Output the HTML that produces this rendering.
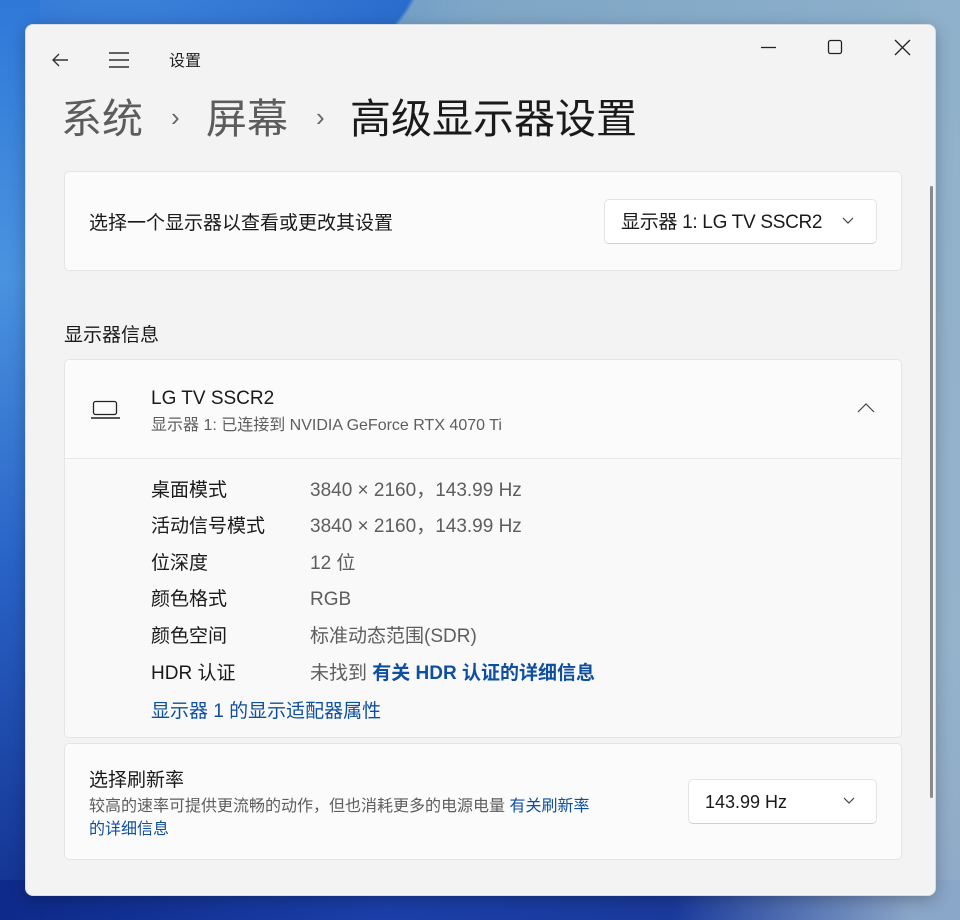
<!DOCTYPE html>
<html><head><meta charset="utf-8"><style>
*{margin:0;padding:0;box-sizing:border-box}
body{width:960px;height:920px;overflow:hidden;position:relative;font-family:"Liberation Sans","Noto Sans CJK SC",sans-serif;
background:linear-gradient(90deg,#1d5fc9 0%,#3c86d8 3%,#7fa6c6 50%,#8db0cb 100%);}
.bg1{position:absolute;left:0;top:0;width:960px;height:920px;background:
radial-gradient(ellipse 500px 260px at 120px -40px,#3f86dc 0%,#2a6ccc 60%,transparent 61%),
radial-gradient(ellipse 700px 200px at 300px 980px,#132c8a 0%,#1a3aa0 70%,transparent 71%);}
.bl{position:absolute;left:0;top:0;width:40px;height:920px;background:linear-gradient(180deg,#2f78d8,#4a93e0 30%,#2a65c8 60%,#12308f 100%)}
.br{position:absolute;right:0;top:0;width:40px;height:920px;background:linear-gradient(180deg,#8fb1cb,#95b3cb 70%,#8fa9c7)}
.bb{position:absolute;left:0;top:880px;width:960px;height:40px;background:linear-gradient(90deg,#0e2a8a,#1b3fa8 40%,#1a3a9c 70%,#8aa6c8 95%)}
.win{position:absolute;left:25px;top:24px;width:911px;height:872px;background:#f3f3f3;border-radius:8px;border:1px solid #d8dde3;box-shadow:0 4px 16px rgba(0,0,0,.25)}
.a{position:absolute;white-space:nowrap;line-height:26px}
.card{position:absolute;background:#fbfbfb;border:1px solid #e5e5e5;border-radius:5px}
.dd{position:absolute;background:#fff;border:1px solid #e3e3e3;border-bottom-color:#d0d0d0;border-radius:5px}
.lbl{font-size:19px;color:#1a1a1a}
.val{font-size:19px;color:#5e5e5e}
.lk{color:#0f4fa0}
</style></head><body>
<div class="bg1"></div><div class="bl"></div><div class="br"></div><div class="bb"></div>
<div class="win">
<svg class="a" style="left:24px;top:25px" width="20" height="20" viewBox="0 0 20 20"><path d="M18 10H3M9 4L3 10l6 6" stroke="#333" stroke-width="1.4" fill="none"/></svg>
<svg class="a" style="left:82px;top:25px" width="22" height="20" viewBox="0 0 22 20"><path d="M1 3h20M1 10h20M1 17h20" stroke="#333" stroke-width="1.4"/></svg>
<div class="a" style="left:143px;top:24px;font-size:16px;color:#222">设置</div>
<svg class="a" style="left:733px;top:21px" width="18" height="4"><path d="M2 1.5h15" stroke="#222" stroke-width="1.3"/></svg>
<svg class="a" style="left:801px;top:14px" width="16" height="16"><rect x="1.5" y="1.5" width="13" height="13" rx="2" stroke="#222" stroke-width="1.3" fill="none"/></svg>
<svg class="a" style="left:868px;top:14px" width="17" height="17"><path d="M1 1l15 15M16 1L1 16" stroke="#222" stroke-width="1.3"/></svg>
<div class="a" style="left:35px;top:71px;font-size:41px;line-height:46px;color:#5c5c5c">系统</div>
<div class="a" style="left:145px;top:77px;font-size:26px;line-height:30px;color:#666">›</div>
<div class="a" style="left:180px;top:71px;font-size:41px;line-height:46px;color:#5c5c5c">屏幕</div>
<div class="a" style="left:290px;top:77px;font-size:26px;line-height:30px;color:#666">›</div>
<div class="a" style="left:324px;top:71px;font-size:41px;line-height:46px;color:#1a1a1a">高级显示器设置</div>

<div class="card" style="left:38px;top:146px;width:838px;height:100px">
<div class="a lbl" style="left:24px;top:39px">选择一个显示器以查看或更改其设置</div>
<div class="dd" style="left:539px;top:27px;width:273px;height:45px">
<div class="a" style="left:16px;top:10px;font-size:19px;color:#1a1a1a;letter-spacing:-0.3px">显示器 1: LG TV SSCR2</div>
<svg class="a" style="left:237px;top:17px" width="12" height="8"><path d="M1 1l5 5 5-5" stroke="#444" stroke-width="1.2" fill="none"/></svg>
</div></div>

<div class="a" style="left:38px;top:298px;font-size:19px;color:#1a1a1a">显示器信息</div>

<div class="card" style="left:38px;top:334px;width:838px;height:379px">
<div style="position:absolute;left:0;top:98px;width:836px;height:1px;background:#e8e8e8"></div>
<div style="position:absolute;left:0;top:99px;width:836px;height:278px;background:#f9f9f9;border-radius:0 0 5px 5px"></div>
<svg class="a" style="left:26px;top:40px" width="30" height="20"><rect x="2.5" y="1.5" width="23" height="13" rx="2" stroke="#222" stroke-width="1.3" fill="none"/><path d="M0 18h29" stroke="#222" stroke-width="1.4"/></svg>
<div class="a" style="left:86px;top:26px;font-size:19px;color:#1a1a1a">LG TV SSCR2</div>
<div class="a" style="left:86px;top:53px;font-size:16px;color:#5e5e5e">显示器 1: 已连接到 NVIDIA GeForce RTX 4070 Ti</div>
<svg class="a" style="left:792px;top:43px" width="18" height="10"><path d="M1 9l8-8 8 8" stroke="#444" stroke-width="1.2" fill="none"/></svg>
<div class="a lbl" style="left:86px;top:118px">桌面模式</div><div class="a val" style="left:245px;top:118px">3840 × 2160，143.99 Hz</div>
<div class="a lbl" style="left:86px;top:154px">活动信号模式</div><div class="a val" style="left:245px;top:154px">3840 × 2160，143.99 Hz</div>
<div class="a lbl" style="left:86px;top:191px">位深度</div><div class="a val" style="left:245px;top:191px">12 位</div>
<div class="a lbl" style="left:86px;top:227px">颜色格式</div><div class="a val" style="left:245px;top:227px">RGB</div>
<div class="a lbl" style="left:86px;top:264px">颜色空间</div><div class="a val" style="left:245px;top:264px">标准动态范围(SDR)</div>
<div class="a lbl" style="left:86px;top:301px">HDR 认证</div><div class="a val" style="left:245px;top:301px">未找到 <span class="lk" style="font-weight:bold">有关 HDR 认证的详细信息</span></div>
<div class="a lk" style="left:86px;top:339px;font-size:19px">显示器 1 的显示适配器属性</div>
</div>

<div class="card" style="left:38px;top:718px;width:838px;height:117px">
<div class="a lbl" style="left:24px;top:24px">选择刷新率</div>
<div class="a" style="left:24px;top:51px;font-size:16px;color:#5e5e5e;line-height:23px">较高的速率可提供更流畅的动作，但也消耗更多的电源电量 <span class="lk">有关刷新率</span><br><span class="lk">的详细信息</span></div>
<div class="dd" style="left:623px;top:35px;width:189px;height:45px">
<div class="a" style="left:16px;top:9px;font-size:18px;color:#1a1a1a">143.99 Hz</div>
<svg class="a" style="left:154px;top:17px" width="12" height="8"><path d="M1 1l5 5 5-5" stroke="#444" stroke-width="1.2" fill="none"/></svg>
</div></div>

<div style="position:absolute;left:904px;top:161px;width:3px;height:612px;background:#8a8a8a;border-radius:2px"></div>
</div>
</body></html>
